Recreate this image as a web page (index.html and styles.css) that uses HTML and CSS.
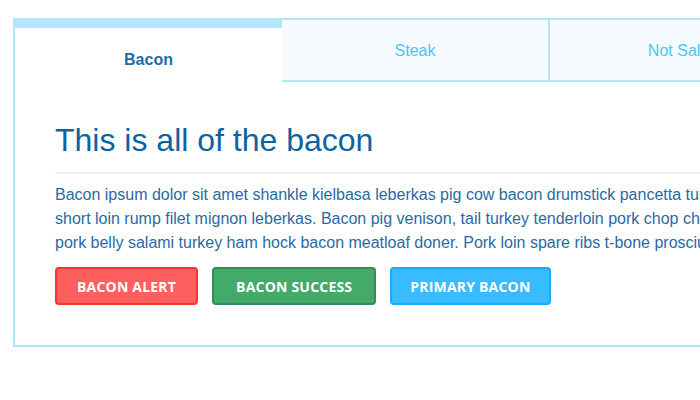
FILE: index.html
```html
<!DOCTYPE html>
<html lang="en">
<head>
  <meta charset="UTF-8">
  <meta name="viewport" content="width=device-width, initial-scale=1.0">
  <title>Bacon Tabs</title>
  <link rel="stylesheet" href="styles.css">
</head>
<body>
  <div class="tabs">
    <nav class="tab-list">
      <div class="tab active">Bacon</div>
      <div class="tab">Steak</div>
      <div class="tab">Not Salad</div>
    </nav>

    <section class="tab-panel">
      <h1>This is all of the bacon</h1>
      <p>Bacon ipsum dolor sit amet shankle kielbasa leberkas pig cow bacon drumstick pancetta turducken short loin rump filet mignon leberkas. Bacon pig venison, tail turkey tenderloin pork chop chicken pork belly salami turkey ham hock bacon meatloaf doner. Pork loin spare ribs t-bone prosciutto.</p>
      <div class="actions">
        <button class="btn btn-alert">Bacon Alert</button>
        <button class="btn btn-success">Bacon Success</button>
        <button class="btn btn-primary">Primary Bacon</button>
      </div>
    </section>
  </div>
</body>
</html>
```

FILE: styles.css
```css
:root {
  --border: #b3e5fc;
  --tab-bg: #f5fbfe;
  --tab-text: #4fc3f7;
  --heading: #0b63a0;
  --text: #2a6aa3;
}

* {
  margin: 0;
  padding: 0;
  box-sizing: border-box;
}

body {
  font-family: "Liberation Sans", Arial, sans-serif;
  background: #fff;
  overflow: hidden;
}

.tabs {
  width: 805px;
  margin: 18px 0 0 13px;
}

.tab-list {
  display: flex;
  align-items: flex-start;
  height: 64px;
}

.tab {
  flex: 0 0 268px;
  height: 64px;
  display: flex;
  align-items: center;
  justify-content: center;
  padding-top: 2px;
  background: var(--tab-bg);
  border: 2px solid var(--border);
  border-left: none;
  color: var(--tab-text);
  font-size: 16px;
}

.tab.active {
  flex-basis: 269px;
  height: 72px;
  position: relative;
  z-index: 1;
  padding-top: 2px;
  background: #fff;
  border-top: 10px solid var(--border);
  border-left: 2px solid var(--border);
  border-right: none;
  border-bottom: none;
  color: #1a6ea8;
  font-weight: bold;
}

.tab-panel {
  border: 2px solid var(--border);
  border-top: none;
  padding: 38px 40px 40px 40px;
}

h1 {
  color: var(--heading);
  font-size: 32px;
  font-weight: normal;
  line-height: 40px;
  padding-bottom: 12px;
  border-bottom: 2px solid #eee;
  margin-bottom: 9px;
  white-space: nowrap;
}

p {
  color: var(--text);
  font-size: 16px;
  line-height: 24px;
  max-width: 708px;
  margin-bottom: 12px;
}

.actions {
  display: flex;
  gap: 14px;
}

.btn {
  height: 38px;
  padding: 0 20px;
  border: 2px solid;
  border-radius: 4px;
  color: #fff;
  font-family: "Open Sans", sans-serif;
  font-size: 14px;
  font-weight: bold;
  letter-spacing: 0.2px;
  text-transform: uppercase;
  cursor: pointer;
}

.btn-alert {
  background: #ff605f;
  border-color: #f73434;
}

.btn-success {
  background: #43aa6a;
  border-color: #358a55;
  padding: 0 22px;
}

.btn-primary {
  background: #38bcff;
  border-color: #19a9ff;
  padding: 0 18px;
}
```
